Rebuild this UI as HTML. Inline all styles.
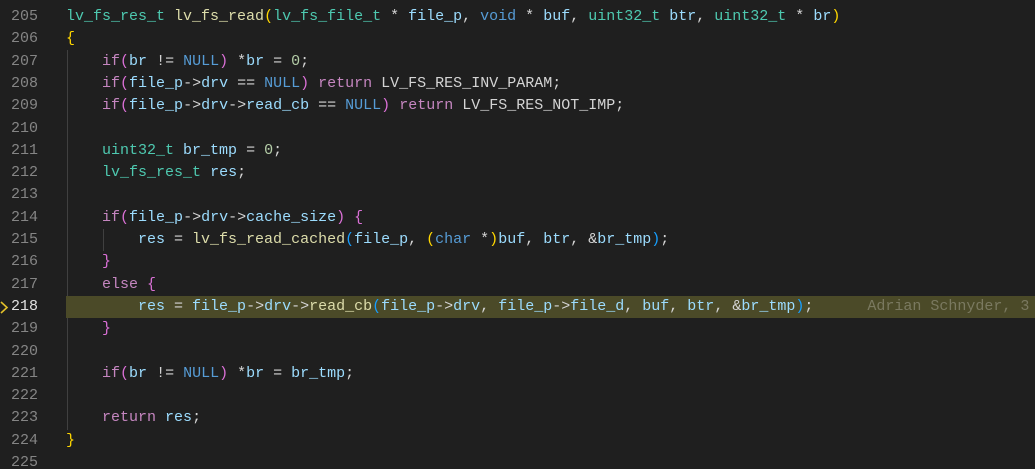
<!DOCTYPE html>
<html><head><meta charset="utf-8"><style>
html,body{margin:0;padding:0;background:#1f1f1f;width:1035px;height:469px;overflow:hidden}
.ed{position:relative;font-family:"Liberation Mono",monospace;font-size:15px;}
.l{position:absolute;left:0;width:1035px;height:22.3px;line-height:22.3px;white-space:pre;color:#d4d4d4}
.n{position:absolute;left:0;width:38px;text-align:right;color:#858585}
.c{position:absolute;left:66px}
.hl{background:#4b4a28}
.g{position:absolute;width:1px;background:#404040}
.t{color:#4ec9b0}.f{color:#dcdcaa}.v{color:#9cdcfe}.k{color:#c586c0}.b{color:#569cd6}.m{color:#b5cea8}
.y{color:#ffd700}.p{color:#da70d6}.u{color:#179fff}
</style></head><body><div class="ed">
<div class="g" style="left:67px;top:50px;height:380px"></div>
<div class="g" style="left:103px;top:229px;height:22px"></div>
<div class="g" style="left:103px;top:296px;height:22px;background:#8a8860"></div>
<div class="l" style="top:6px"><span class="n">205</span><span class="c"><span class="t">lv_fs_res_t</span> <span class="f">lv_fs_read</span><span class="y">(</span><span class="t">lv_fs_file_t</span> * <span class="v">file_p</span>, <span class="b">void</span> * <span class="v">buf</span>, <span class="t">uint32_t</span> <span class="v">btr</span>, <span class="t">uint32_t</span> * <span class="v">br</span><span class="y">)</span></span></div>
<div class="l" style="top:28.3px"><span class="n">206</span><span class="c"><span class="y">{</span></span></div>
<div class="l" style="top:50.6px"><span class="n">207</span><span class="c">    <span class="k">if</span><span class="p">(</span><span class="v">br</span> != <span class="b">NULL</span><span class="p">)</span> *<span class="v">br</span> = <span class="m">0</span>;</span></div>
<div class="l" style="top:72.9px"><span class="n">208</span><span class="c">    <span class="k">if</span><span class="p">(</span><span class="v">file_p</span>-><span class="v">drv</span> == <span class="b">NULL</span><span class="p">)</span> <span class="k">return</span> LV_FS_RES_INV_PARAM;</span></div>
<div class="l" style="top:95.2px"><span class="n">209</span><span class="c">    <span class="k">if</span><span class="p">(</span><span class="v">file_p</span>-><span class="v">drv</span>-><span class="v">read_cb</span> == <span class="b">NULL</span><span class="p">)</span> <span class="k">return</span> LV_FS_RES_NOT_IMP;</span></div>
<div class="l" style="top:117.5px"><span class="n">210</span></div>
<div class="l" style="top:139.8px"><span class="n">211</span><span class="c">    <span class="t">uint32_t</span> <span class="v">br_tmp</span> = <span class="m">0</span>;</span></div>
<div class="l" style="top:162.1px"><span class="n">212</span><span class="c">    <span class="t">lv_fs_res_t</span> <span class="v">res</span>;</span></div>
<div class="l" style="top:184.4px"><span class="n">213</span></div>
<div class="l" style="top:206.7px"><span class="n">214</span><span class="c">    <span class="k">if</span><span class="p">(</span><span class="v">file_p</span>-><span class="v">drv</span>-><span class="v">cache_size</span><span class="p">)</span> <span class="p">{</span></span></div>
<div class="l" style="top:229px"><span class="n">215</span><span class="c">        <span class="v">res</span> = <span class="f">lv_fs_read_cached</span><span class="u">(</span><span class="v">file_p</span>, <span class="y">(</span><span class="b">char</span> *<span class="y">)</span><span class="v">buf</span>, <span class="v">btr</span>, &amp;<span class="v">br_tmp</span><span class="u">)</span>;</span></div>
<div class="l" style="top:251.3px"><span class="n">216</span><span class="c">    <span class="p">}</span></span></div>
<div class="l" style="top:273.6px"><span class="n">217</span><span class="c">    <span class="k">else</span> <span class="p">{</span></span></div>
<div class="l" style="top:295.9px"><span class="n" style="color:#e0e0e0">218</span><svg style="position:absolute;left:0;top:5px" width="9" height="13" viewBox="0 0 9 13"><path d="M1 1 L7 6.5 L1 12" fill="none" stroke="#e2c02a" stroke-width="1.6"/></svg><span class="c hl" style="width:969px">        <span class="v">res</span> = <span class="v">file_p</span>-><span class="v">drv</span>-><span class="f">read_cb</span><span class="u">(</span><span class="v">file_p</span>-><span class="v">drv</span>, <span class="v">file_p</span>-><span class="v">file_d</span>, <span class="v">buf</span>, <span class="v">btr</span>, &amp;<span class="v">br_tmp</span><span class="u">)</span>;      <span style="color:#7a7960">Adrian Schnyder, 3</span></span></div>
<div class="l" style="top:318.2px"><span class="n">219</span><span class="c">    <span class="p">}</span></span></div>
<div class="l" style="top:340.5px"><span class="n">220</span></div>
<div class="l" style="top:362.8px"><span class="n">221</span><span class="c">    <span class="k">if</span><span class="p">(</span><span class="v">br</span> != <span class="b">NULL</span><span class="p">)</span> *<span class="v">br</span> = <span class="v">br_tmp</span>;</span></div>
<div class="l" style="top:385.1px"><span class="n">222</span></div>
<div class="l" style="top:407.4px"><span class="n">223</span><span class="c">    <span class="k">return</span> <span class="v">res</span>;</span></div>
<div class="l" style="top:429.7px"><span class="n">224</span><span class="c"><span class="y">}</span></span></div>
<div class="l" style="top:452px"><span class="n">225</span></div>
</div></body></html>
